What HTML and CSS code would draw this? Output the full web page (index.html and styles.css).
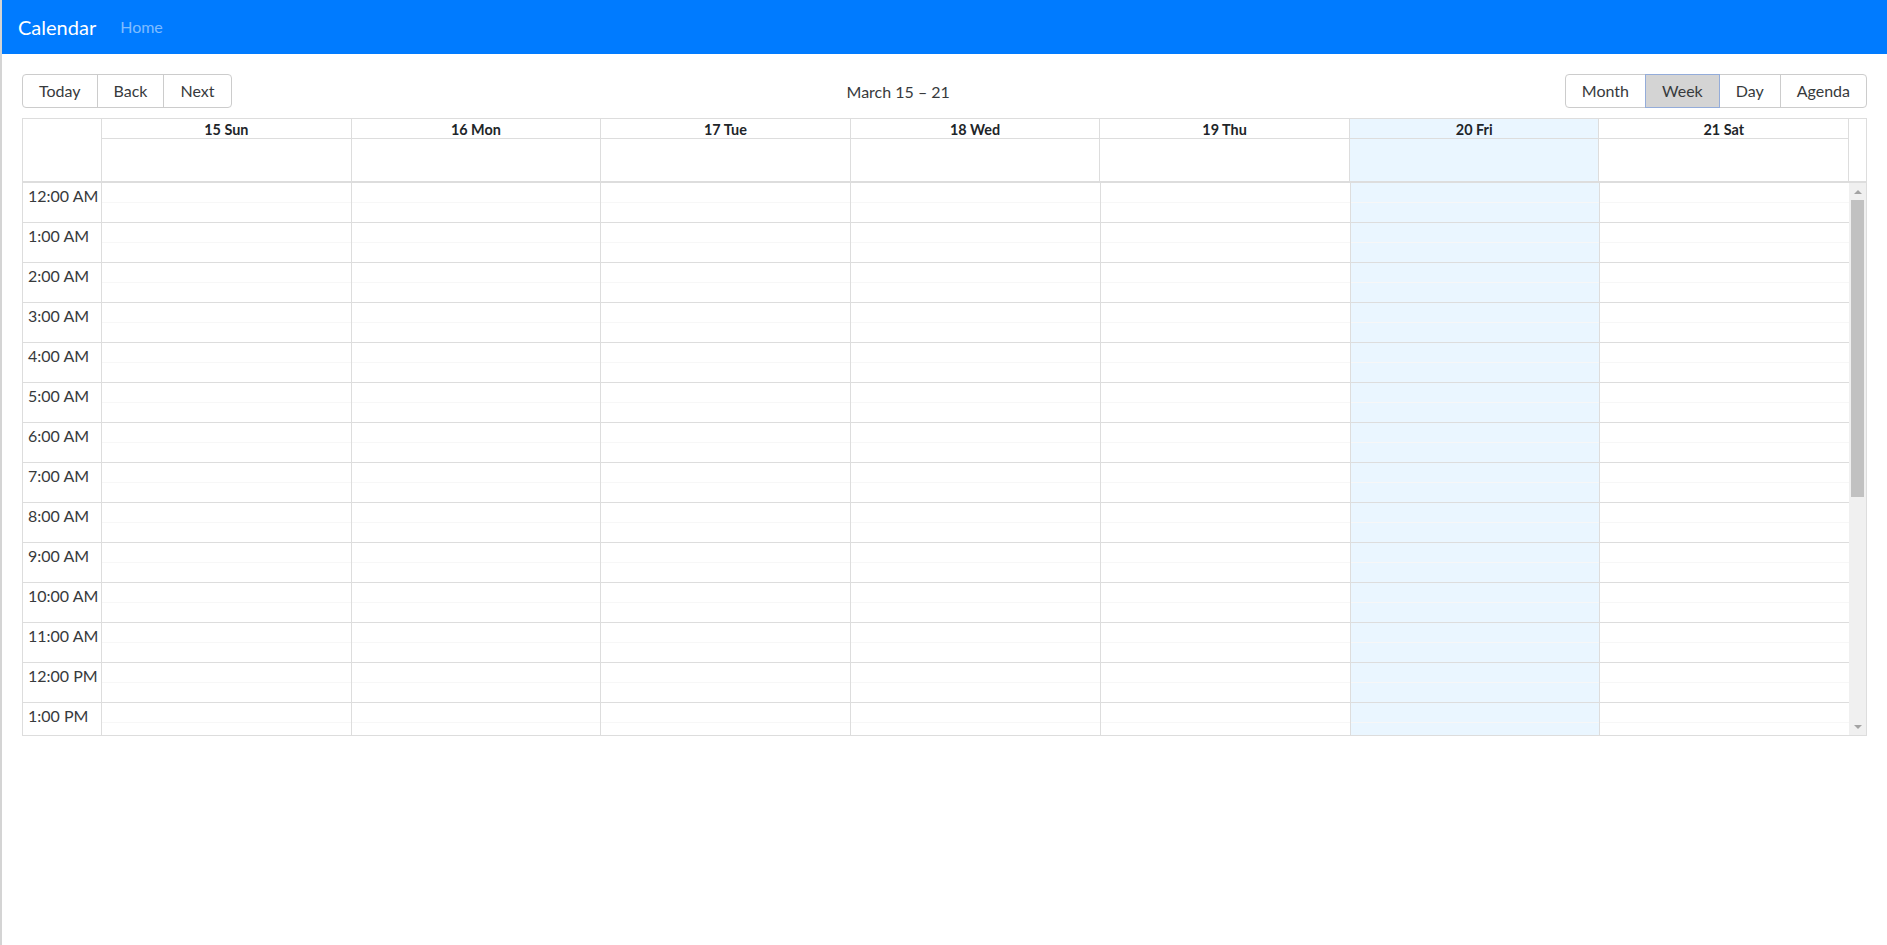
FILE: index.html
```html
<!DOCTYPE html>
<html lang="en">
<head>
  <meta charset="UTF-8">
  <meta name="viewport" content="width=device-width, initial-scale=1.0">
  <title>Calendar</title>
  <link rel="stylesheet" href="styles.css">
</head>
<body>
  <nav class="navbar">
    <a class="navbar-brand" href="#">Calendar</a>
    <a class="nav-link" href="#">Home</a>
  </nav>

  <main class="page">
    <div class="calendar">
      <div class="toolbar">
        <span class="btn-group">
          <button type="button">Today</button>
          <button type="button">Back</button>
          <button type="button">Next</button>
        </span>
        <span class="toolbar-label">March 15 – 21</span>
        <span class="btn-group">
          <button type="button">Month</button>
          <button type="button" class="active">Week</button>
          <button type="button">Day</button>
          <button type="button">Agenda</button>
        </span>
      </div>

      <div class="time-view">
        <div class="time-header">
          <div class="header-gutter"></div>
          <div class="header-day"><div class="header-cell">15 Sun</div><div class="allday-cell"></div></div>
          <div class="header-day"><div class="header-cell">16 Mon</div><div class="allday-cell"></div></div>
          <div class="header-day"><div class="header-cell">17 Tue</div><div class="allday-cell"></div></div>
          <div class="header-day"><div class="header-cell">18 Wed</div><div class="allday-cell"></div></div>
          <div class="header-day"><div class="header-cell">19 Thu</div><div class="allday-cell"></div></div>
          <div class="header-day today"><div class="header-cell">20 Fri</div><div class="allday-cell"></div></div>
          <div class="header-day"><div class="header-cell">21 Sat</div><div class="allday-cell"></div></div>
        </div>

        <div class="time-body">
          <div class="time-content">
            <div class="time-gutter" id="gutter"></div>
            <div class="day-col"></div>
            <div class="day-col"></div>
            <div class="day-col"></div>
            <div class="day-col"></div>
            <div class="day-col"></div>
            <div class="day-col today"></div>
            <div class="day-col"></div>
          </div>
          <div class="scrollbar">
            <div class="scroll-btn up"></div>
            <div class="scroll-track"><div class="scroll-thumb"></div></div>
            <div class="scroll-btn down"></div>
          </div>
        </div>
      </div>
    </div>
  </main>

  <script>
    const gutter = document.getElementById('gutter');
    const dayCols = document.querySelectorAll('.day-col');

    // One group per hour, two half-hour slots each
    function makeGroup(labelText) {
      const group = document.createElement('div');
      group.className = 'slot-group';
      for (let i = 0; i < 2; i++) {
        const slot = document.createElement('div');
        slot.className = 'slot';
        if (labelText && i === 0) {
          const label = document.createElement('span');
          label.className = 'time-label';
          label.textContent = labelText;
          slot.appendChild(label);
        }
        group.appendChild(slot);
      }
      return group;
    }

    for (let h = 0; h < 24; h++) {
      const hour = h % 12 === 0 ? 12 : h % 12;
      const suffix = h < 12 ? 'AM' : 'PM';
      gutter.appendChild(makeGroup(`${hour}:00 ${suffix}`));
      dayCols.forEach((col) => col.appendChild(makeGroup()));
    }
  </script>
</body>
</html>
```

FILE: styles.css
```css
* {
  box-sizing: border-box;
}

body {
  margin: 0;
  min-height: 100vh;
  border-left: 2px solid #d4d4d4;
  font-family: "Segoe UI", Lato, "Liberation Sans", sans-serif;
  font-size: 16px;
  color: #212529;
  overflow: hidden;
}

.navbar {
  display: flex;
  align-items: center;
  height: 54px;
  padding: 0 16px;
  background-color: #007bff;
}

.navbar-brand {
  color: #fff;
  font-size: 20px;
  text-decoration: none;
  margin-right: 24px;
}

.nav-link {
  color: rgba(255, 255, 255, 0.5);
  text-decoration: none;
  margin-bottom: 2px;
}

.page {
  padding: 20px 20px 0 20px;
}

.calendar {
  display: flex;
  flex-direction: column;
  height: 662px;
}

/* toolbar */
.toolbar {
  display: flex;
  align-items: center;
  margin-bottom: 10px;
}

.btn-group {
  display: inline-flex;
}

.btn-group button {
  font-family: inherit;
  font-size: 16px;
  line-height: 20px;
  color: #373a3c;
  background: none;
  border: 1px solid #ccc;
  border-radius: 0;
  padding: 6px 16px;
  margin: 0;
  cursor: pointer;
}

.btn-group button + button {
  margin-left: -1px;
}

.btn-group button:first-child {
  border-radius: 4px 0 0 4px;
}

.btn-group button:last-child {
  border-radius: 0 4px 4px 0;
}

.btn-group button.active {
  position: relative;
  background-color: #d4d4d4;
  border-color: #94acd9;
}

.toolbar-label {
  flex-grow: 1;
  text-align: center;
  padding: 0 10px;
  color: #373a3c;
}

/* week grid */
.time-view {
  flex: 1;
  min-height: 0;
  display: flex;
  flex-direction: column;
  border: 1px solid #ddd;
}

.time-header {
  display: flex;
  margin-right: 17px;
  border-right: 1px solid #ddd;
}

.header-gutter {
  width: 78px;
  flex: none;
}

.header-day {
  flex: 1;
  border-left: 1px solid #ddd;
}

.header-cell {
  height: 20px;
  line-height: 19px;
  padding: 1px 3px 0;
  text-align: center;
  font-size: 14.4px;
  font-weight: bold;
  border-bottom: 1px solid #ddd;
}

.allday-cell {
  height: 42px;
}

.today {
  background-color: #eaf6ff;
}

.time-body {
  flex: 1;
  min-height: 0;
  display: flex;
  border-top: 2px solid #ddd;
}

.time-content {
  flex: 1;
  display: flex;
  align-items: flex-start;
  overflow: hidden;
}

.time-gutter {
  width: 78px;
  flex: none;
}

.day-col {
  flex: 1;
  border-left: 1px solid #ddd;
}

.slot-group {
  display: flex;
  flex-direction: column;
  height: 40px;
  border-bottom: 1px solid #ddd;
}

.slot {
  flex: 1;
}

.day-col .slot + .slot {
  border-top: 1px solid #f7f7f7;
}

.time-label {
  display: block;
  padding: 3px 5px 0;
  line-height: 20px;
  color: #373a3c;
  white-space: nowrap;
}

/* classic vertical scrollbar */
.scrollbar {
  width: 17px;
  flex: none;
  display: flex;
  flex-direction: column;
  background-color: #f0f0f0;
}

.scroll-btn {
  height: 17px;
  display: flex;
  align-items: center;
  justify-content: center;
}

.scroll-btn.up::before,
.scroll-btn.down::before {
  content: "";
  border-left: 4px solid transparent;
  border-right: 4px solid transparent;
}

.scroll-btn.up::before {
  border-bottom: 4px solid #a3a3a3;
}

.scroll-btn.down::before {
  border-top: 4px solid #a3a3a3;
}

.scroll-track {
  flex: 1;
}

.scroll-thumb {
  height: 297px;
  margin: 0 2px;
  background-color: #c1c1c1;
}
```
